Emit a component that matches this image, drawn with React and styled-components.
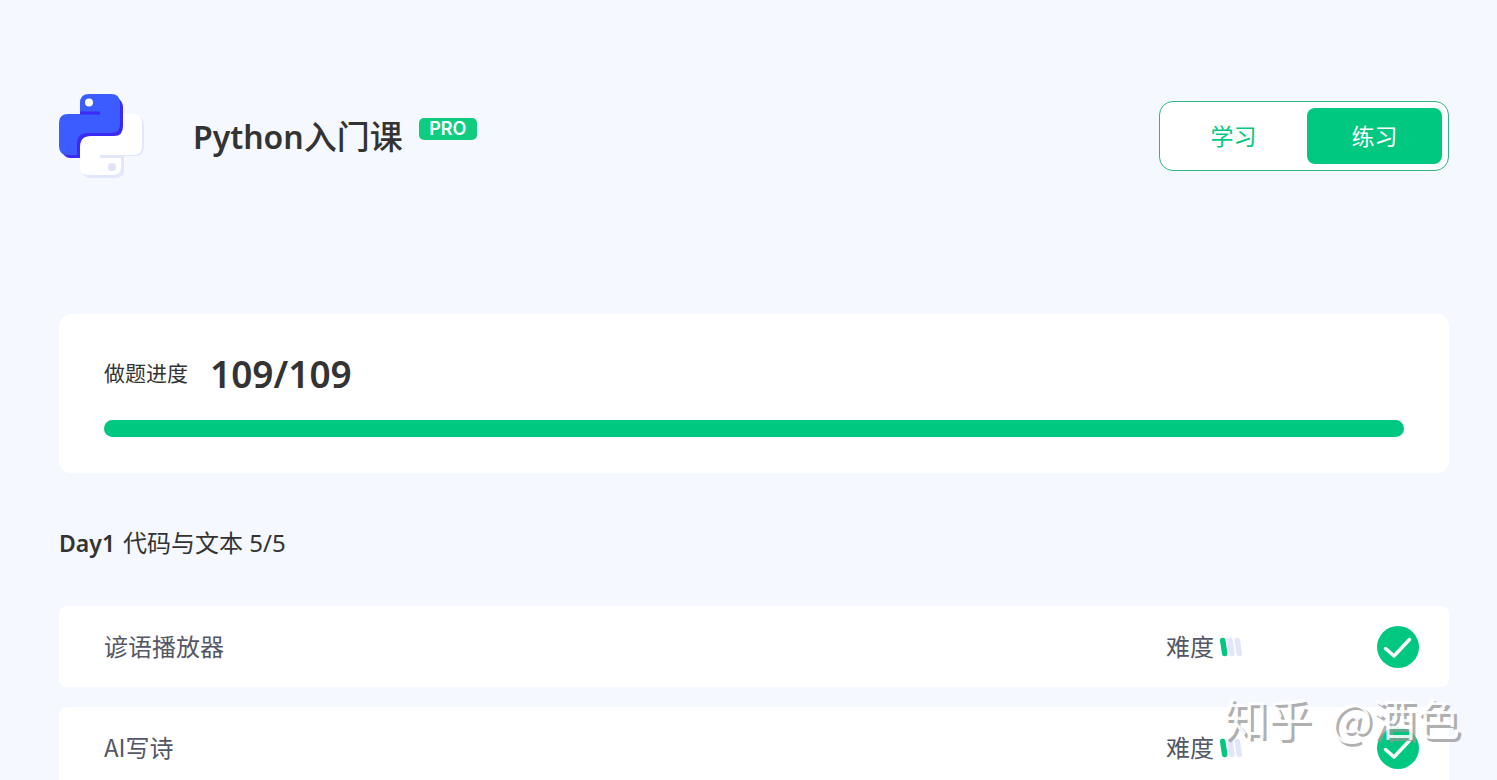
import React from 'react';
import styled, { createGlobalStyle } from 'styled-components';

const lessons = [
  { id: 1, name: '谚语播放器', level: 1 },
  { id: 2, name: 'AI写诗', level: 1 },
];

const Logo = () => (
  <LogoSvg viewBox="19 13 86 87" aria-hidden="true">
    <path
      fill="#e3e7fb"
      d="M44 66q0-8 8-8h24q10 0 10-10V36h9q9 0 9 9v22q0 9-9 9H84v14q0 8-9 8H52q-8 0-9-5z"
    />
    <path
      fill="#fff"
      d="M40 66q0-11 10-11h25q8 0 8-8V34h10q9 0 9 9v23q0 9-9 9H81v12q0 8-8 8H49q-9 0-9-8z"
    />
    <path stroke="#e3e7fb" strokeWidth="3" d="M60 76.500h22" />
    <circle cx="72" cy="87" r="4" fill="#dfe3f5" />
    <path
      fill="#3a2af5"
      d="M40 24q0-9 9-9h23q2 0 5 2l4 4q2 3 2 6v19q0 10-9 10H51q-11 0-11 11v11H30q-3 0-5-2l-4-4V43h19z"
    />
    <path
      fill="#3d5cff"
      d="M40 23q0-9 9-9h22q9 0 9 9v21q0 9-9 9H48q-11 0-11 11v11H28q-9 0-9-9V43q0-9 9-9h12z"
    />
    <path stroke="#3a2af5" strokeWidth="3" d="M40 33h20" />
    <circle cx="49" cy="22.500" r="4" fill="#fff" />
  </LogoSvg>
);

const Difficulty = ({ level }) => (
  <LevelSvg viewBox="0 0 22 20" role="img" aria-label={`${level}/3`}>
    {[0, 1, 2].map(i => (
      <path
        key={i}
        d={`M${2.7 + i * 7.3} 3.500l2 13`}
        stroke={i < level ? '#00c880' : '#e1e6fa'}
        strokeWidth="5.5"
        strokeLinecap="round"
      />
    ))}
  </LevelSvg>
);

const Done = () => (
  <DoneSvg viewBox="0 0 42 42" role="img" aria-label="已完成">
    <circle cx="21" cy="21" r="21" fill="#00c880" />
    <path
      d="M8.500 22.500l8.500 7.500L32.500 13.500"
      fill="none"
      stroke="#fff"
      strokeWidth="3.500"
      strokeLinecap="round"
      strokeLinejoin="round"
    />
  </DoneSvg>
);

export default function App() {
  return (
    <Page>
      <GlobalStyle />
      <Header>
        <Logo />
        <Title>
          Python<span>入门课</span>
        </Title>
        <ProBadge>PRO</ProBadge>
        <Switcher>
          <SwitchButton type="button">学习</SwitchButton>
          <SwitchButton type="button" $active>
            练习
          </SwitchButton>
        </Switcher>
      </Header>
      <ProgressCard>
        <ProgressInfo>
          <ProgressLabel id="progress-label">做题进度</ProgressLabel>
          <ProgressCount>109/109</ProgressCount>
        </ProgressInfo>
        <Track
          role="progressbar"
          aria-labelledby="progress-label"
          aria-valuenow={109}
          aria-valuemax={109}
        >
          <Bar style={{ width: `${(109 / 109) * 100}%` }} />
        </Track>
      </ProgressCard>
      <DayTitle>
        <strong>Day1</strong>
        <span>代码与文本 5/5</span>
      </DayTitle>
      <LessonList>
        {lessons.map(lesson => (
          <Lesson key={lesson.id}>
            <LessonName>{lesson.name}</LessonName>
            <LevelWrapper>
              <span>难度</span>
              <Difficulty level={lesson.level} />
            </LevelWrapper>
            <Done />
          </Lesson>
        ))}
      </LessonList>
      <Watermark>
        <span>知乎</span>
        <span>@酒色</span>
      </Watermark>
    </Page>
  );
}

const GlobalStyle = createGlobalStyle`
  * {
    box-sizing: border-box;
  }
  body {
    margin: 0;
    background: #f5f8ff;
    color: #333;
    font-family: 'Noto Sans CJK SC', sans-serif;
  }
`;

const Page = styled.main`
  position: relative;
  height: 100vh;
  overflow: hidden;
  padding: 93px 48px 0 59px;
`;

const Header = styled.header`
  display: flex;
  align-items: flex-start;
`;

const LogoSvg = styled.svg`
  width: 86px;
  height: 87px;
  margin-right: 48px;
  fill: none;
`;

const Title = styled.h1`
  margin: 20px 0 0;
  font-size: 32px;
  line-height: 48px;
  font-weight: 600;
  font-family: 'Noto Sans', 'Noto Sans CJK SC', sans-serif;
  span {
    font-size: 33px;
    font-weight: 500;
  }
`;

const ProBadge = styled.span`
  margin: 25px 0 0 16px;
  width: 58px;
  border-radius: 5px;
  background: #10cc81;
  color: #fff;
  font: 600 18px/22px Inter, sans-serif;
  text-align: center;
`;

const Switcher = styled.div`
  display: flex;
  gap: 6px;
  margin: 8px 0 0 auto;
  padding: 6px;
  border: 1px solid #2fb583;
  border-radius: 14px;
  background: #fff;
`;

const SwitchButton = styled.button`
  width: 135px;
  height: 56px;
  padding: 0 0 2px;
  border: none;
  border-radius: 8px;
  background: ${props => (props.$active ? '#00c880' : 'transparent')};
  color: ${props => (props.$active ? '#fff' : '#00c880')};
  font-family: inherit;
  font-size: 23px;
  cursor: pointer;
`;

const ProgressCard = styled.section`
  margin-top: 134px;
  padding: 36px 45px;
  border-radius: 12px;
  background: #fff;
`;

const ProgressInfo = styled.div`
  display: flex;
  align-items: center;
  gap: 22px;
  height: 48px;
  margin-bottom: 22px;
`;

const ProgressLabel = styled.span`
  padding-bottom: 4px;
  font-size: 21px;
`;

const ProgressCount = styled.strong`
  font-family: 'Noto Sans', sans-serif;
  font-size: 37px;
  line-height: 48px;
  font-weight: 600;
`;

const Track = styled.div`
  height: 17px;
  border-radius: 9px;
  background: #e1e6fa;
`;

const Bar = styled.div`
  height: 100%;
  border-radius: inherit;
  background: #00c880;
`;

const DayTitle = styled.h2`
  display: flex;
  align-items: center;
  gap: 8px;
  margin: 52px 0 45px;
  font-family: 'Noto Sans', 'Noto Sans CJK SC', sans-serif;
  font-size: 24px;
  line-height: 36px;
  font-weight: 400;
  strong {
    font-size: 23px;
    font-weight: 600;
  }
`;

const LessonList = styled.ul`
  display: grid;
  gap: 20px;
  margin: 0;
  padding: 0;
  list-style: none;
`;

const Lesson = styled.li`
  display: flex;
  align-items: center;
  height: 81px;
  padding: 1px 30px 0 45px;
  border-radius: 8px;
  background: #fff;
  color: #535766;
  font-size: 24px;
  line-height: 36px;
  span {
    padding-bottom: 3px;
  }
`;

const LessonName = styled.span`
  flex: 1;
`;

const LevelWrapper = styled.div`
  display: flex;
  align-items: center;
  gap: 6px;
  margin-right: 135px;
`;

const LevelSvg = styled.svg`
  width: 22px;
  height: 20px;
`;

const DoneSvg = styled.svg`
  width: 42px;
  height: 42px;
`;

const Watermark = styled.div`
  position: absolute;
  right: 37px;
  bottom: 29px;
  display: flex;
  gap: 19px;
  color: rgba(255, 255, 255, 0.9);
  font-size: 44px;
  line-height: 68px;
  text-shadow: 3px 3px 0 rgba(150, 150, 150, 0.75);
  pointer-events: none;
`;
